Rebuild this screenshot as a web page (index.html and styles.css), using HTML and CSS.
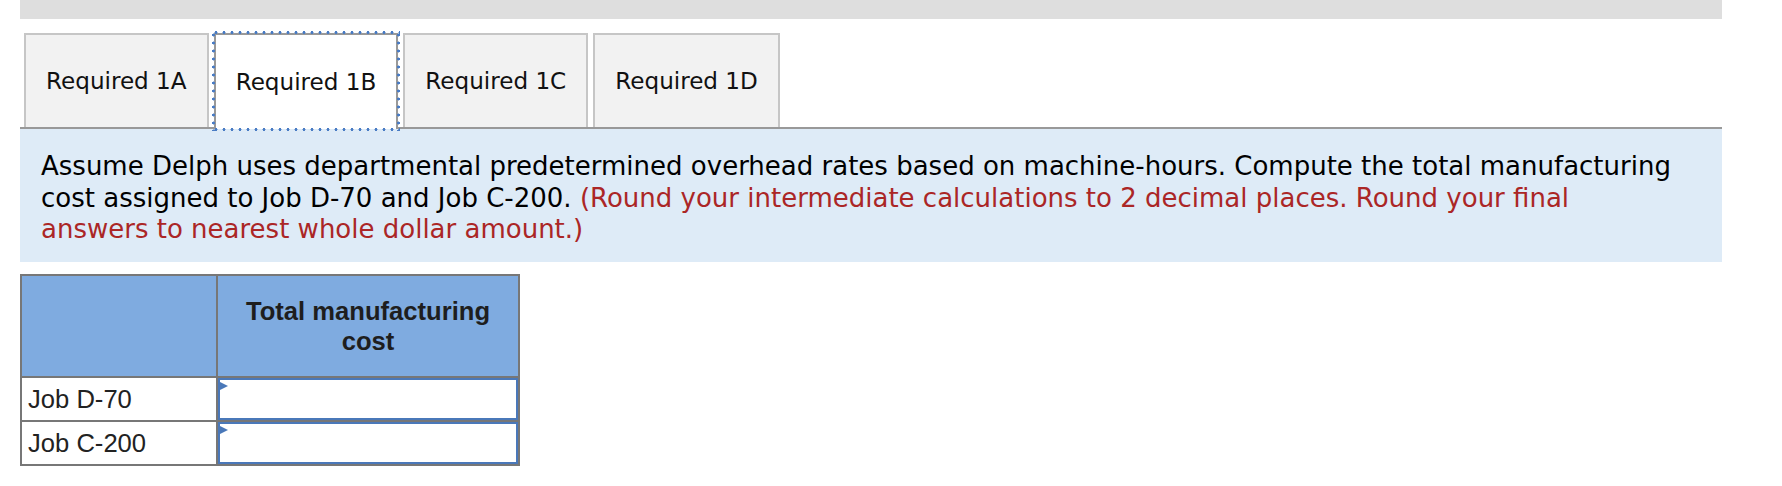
FILE: index.html
```html
<!DOCTYPE html>
<html lang="en">
<head>
<meta charset="utf-8">
<title>Required 1B</title>
<link rel="stylesheet" href="styles.css">
</head>
<body>
<div class="page">
  <div class="topbar"></div>
  <div class="tabs">
    <div class="tab">Required 1A</div>
    <div class="tab active">Required 1B</div>
    <div class="tab">Required 1C</div>
    <div class="tab">Required 1D</div>
  </div>
  <div class="panel">
    <p>Assume Delph uses departmental predetermined overhead rates based on machine-hours. Compute the total manufacturing cost assigned to Job D-70 and Job C-200. <span class="hint">(Round your intermediate calculations to 2 decimal places. Round your final answers to nearest whole dollar amount.)</span></p>
  </div>
  <div class="answer">
    <div class="head"></div>
    <div class="head title">Total manufacturing<br>cost</div>
    <div class="label">Job D-70</div>
    <div class="cell"><div class="input"><span class="marker"></span></div></div>
    <div class="label">Job C-200</div>
    <div class="cell"><div class="input"><span class="marker"></span></div></div>
  </div>
</div>
</body>
</html>
```
FILE: styles.css
```css
body {
  margin: 0;
  background: #fff;
}

.page {
  margin-left: 20px;
  width: 1702px;
}

.topbar {
  height: 19px;
  background: #dedede;
}

.tabs {
  display: flex;
  height: 94px;
  margin-top: 14px;
  padding-left: 4px;
  border-bottom: 2px solid #999;
}

.tab {
  display: flex;
  align-items: center;
  padding: 0 20px;
  margin-right: 5px;
  border: 2px solid #c6c6c6;
  border-bottom: none;
  background: #f2f2f2;
  font-family: "DejaVu Sans", Verdana, sans-serif;
  font-size: 23.1px;
  color: #111;
  white-space: nowrap;
}

.tab.active {
  position: relative;
  background: #fff;
  border-color: #999;
  margin-bottom: -2px;
}

.tab.active::after {
  content: "";
  position: absolute;
  top: -4px;
  left: -4px;
  right: -4px;
  bottom: -2px;
  pointer-events: none;
  background:
    radial-gradient(circle, #4a7cc4 1.2px, transparent 1.8px) 0 0 / 8px 3px repeat-x,
    radial-gradient(circle, #4a7cc4 1.2px, transparent 1.8px) 0 100% / 8px 3px repeat-x,
    radial-gradient(circle, #4a7cc4 1.2px, transparent 1.8px) 0 0 / 3px 8px repeat-y,
    radial-gradient(circle, #4a7cc4 1.2px, transparent 1.8px) 100% 0 / 3px 8px repeat-y;
}

.panel {
  background: #deebf7;
  padding: 22px 40px 16.5px 21px;
  font-family: "DejaVu Sans", Verdana, sans-serif;
  font-size: 26px;
  line-height: 31.5px;
  color: #000;
}

.panel p {
  margin: 0;
}

.hint {
  color: #ab2626;
}

.answer {
  display: grid;
  grid-template-columns: 194px 300px;
  grid-template-rows: 100px 42px 42px;
  gap: 2px;
  padding: 2px;
  width: 500px;
  box-sizing: border-box;
  margin-top: 12px;
  background: #777;
  font-family: "Liberation Sans", Arial, sans-serif;
  font-size: 25.6px;
  color: #222;
}

.head {
  background: #7fabe0;
}

.title {
  display: flex;
  align-items: center;
  justify-content: center;
  text-align: center;
  font-weight: bold;
  line-height: 30px;
  color: #1e1e1e;
}

.label {
  display: flex;
  align-items: center;
  padding-left: 6px;
  background: #fff;
}

.cell {
  display: flex;
  background: #fff;
}

.input {
  position: relative;
  flex: 1;
  border: 2px solid #4a78b9;
  background: #fff;
}

.marker {
  position: absolute;
  top: 2px;
  left: 0;
  width: 0;
  height: 0;
  border-left: 8px solid #4a78b9;
  border-top: 4.5px solid transparent;
  border-bottom: 4.5px solid transparent;
}
```
